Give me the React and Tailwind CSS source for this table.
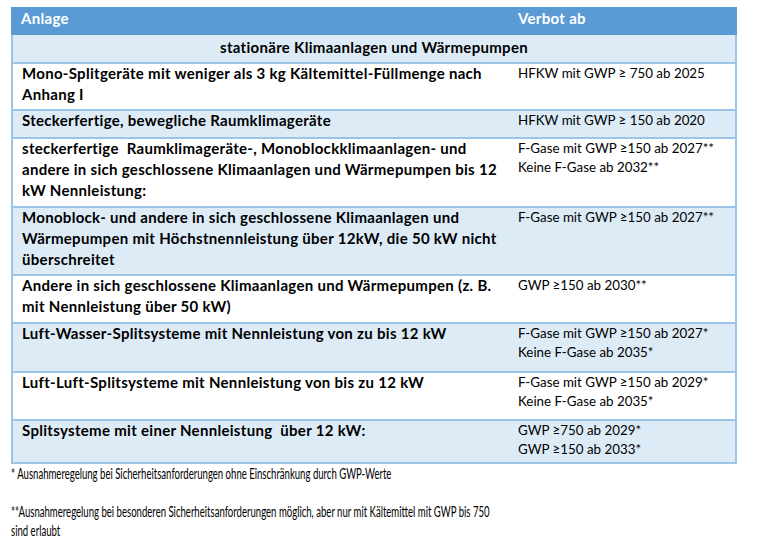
const rows = [
  {
    left: ['Mono-Splitgeräte mit weniger als 3 kg Kältemittel-Füllmenge nach', 'Anhang I'],
    right: ['HFKW mit GWP ≥ 750 ab 2025'],
    h: 'h-[47px]',
    tint: false,
  },
  {
    left: ['Steckerfertige, bewegliche Raumklimageräte'],
    right: ['HFKW mit GWP ≥ 150 ab 2020'],
    h: 'h-[28px]',
    tint: true,
  },
  {
    left: [
      'steckerfertige\u00a0 Raumklimageräte-, Monoblockklimaanlagen- und',
      'andere in sich geschlossene Klimaanlagen und Wärmepumpen bis 12',
      'kW Nennleistung:',
    ],
    right: ['F-Gase mit GWP ≥150 ab 2027**', 'Keine F-Gase ab 2032**'],
    h: 'h-[69px]',
    tint: false,
  },
  {
    left: [
      'Monoblock- und andere in sich geschlossene Klimaanlagen und',
      'Wärmepumpen mit Höchstnennleistung über 12kW, die 50 kW nicht',
      'überschreitet',
    ],
    right: ['F-Gase mit GWP ≥150 ab 2027**'],
    h: 'h-[68px]',
    tint: true,
  },
  {
    left: ['Andere in sich geschlossene Klimaanlagen und Wärmepumpen (z. B.', 'mit Nennleistung über 50 kW)'],
    right: ['GWP ≥150 ab 2030**'],
    h: 'h-[48px]',
    tint: false,
  },
  {
    left: ['Luft-Wasser-Splitsysteme mit Nennleistung von zu bis 12 kW'],
    right: ['F-Gase mit GWP ≥150 ab 2027*', 'Keine F-Gase ab 2035*'],
    h: 'h-[49px]',
    tint: true,
  },
  {
    left: ['Luft-Luft-Splitsysteme mit Nennleistung von bis zu 12 kW'],
    right: ['F-Gase mit GWP ≥150 ab 2029*', 'Keine F-Gase ab 2035*'],
    h: 'h-[48px]',
    tint: false,
  },
  {
    left: ['Splitsysteme mit einer Nennleistung\u00a0 über 12 kW:'],
    right: ['GWP ≥750 ab 2029*', 'GWP ≥150 ab 2033*'],
    h: 'h-[43px]',
    tint: true,
  },
]

function Row({ row }) {
  return (
    <div
      className={`grid grid-cols-[505px_1fr] border-t-2 border-[#9dc3e6] ${row.h} ${
        row.tint ? 'bg-[#ddebf7]' : 'bg-white'
      }`}
    >
      <div className="pl-[9px] -mt-[1px] font-bold text-[15px] tracking-[0.3px] leading-[21px] text-black whitespace-nowrap">
        {row.left.map((l, i) => (
          <div key={i}>{l}</div>
        ))}
      </div>
      <div className="text-[13.35px] leading-[19px] text-black whitespace-nowrap">
        {row.right.map((l, i) => (
          <div key={i}>{l}</div>
        ))}
      </div>
    </div>
  )
}

export default function App() {
  return (
    <div className="w-[769px] h-[545px] bg-white pt-[7px] pl-[11px] font-['Lato',sans-serif]">
      <div className="w-[726px] border-x-2 border-b-2 border-[#9dc3e6]">
        {/* header */}
        <div className="grid grid-cols-[505px_1fr] h-[28px] bg-[#5b9bd5] -mx-[2px] pt-[1px] leading-[21px] text-white font-bold text-[15px] tracking-[0.3px]">
          <div className="pl-[10px]">Anlage</div>
          <div className="pl-[2px]">Verbot ab</div>
        </div>
        <div className="h-[27px] bg-[#ddebf7] flex items-center justify-center pb-[2px] font-bold text-[15px] tracking-[0.3px]">
          stationäre Klimaanlagen und Wärmepumpen
        </div>
        {rows.map((r, i) => (
          <Row key={i} row={r} />
        ))}
      </div>

      {/* footnotes */}
      <div className="text-[14.5px] leading-[19px] text-black whitespace-nowrap origin-left scale-x-[0.66]">
        <div>* Ausnahmeregelung bei Sicherheitsanforderungen ohne Einschränkung durch GWP-Werte</div>
        <div className="mt-[19px]">
          **Ausnahmeregelung bei besonderen Sicherheitsanforderungen möglich, aber nur mit Kältemittel mit GWP bis 750
        </div>
        <div>sind erlaubt</div>
      </div>
    </div>
  )
}
